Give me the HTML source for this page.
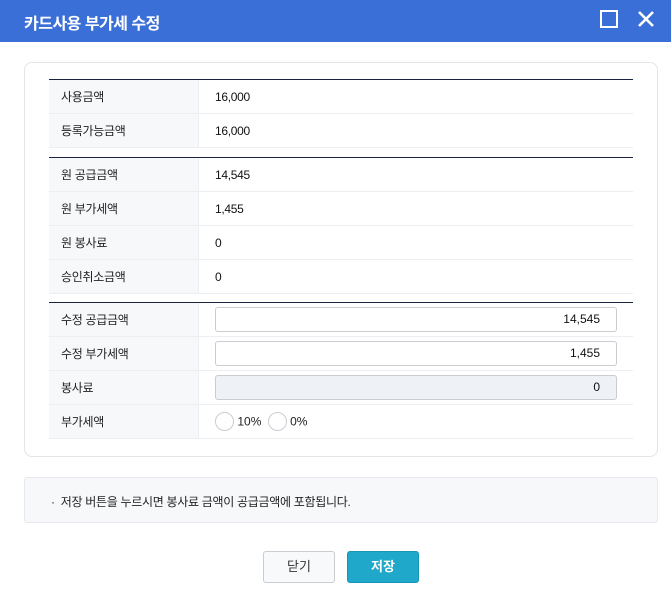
<!DOCTYPE html>
<html><head><meta charset="utf-8"><style>
*{box-sizing:border-box;margin:0;padding:0}
body{width:671px;height:608px;background:#fff;font-family:"Liberation Sans","Noto Sans CJK KR",sans-serif;font-size:12px;color:#222;position:relative;overflow:hidden}
.hd{position:absolute;left:0;top:0;width:671px;height:42px;background:#3b6fd8;color:#fff}
.hd .t{position:absolute;left:24px;top:10px;font-size:16px;font-weight:bold;letter-spacing:-0.5px}
.card{position:absolute;left:24px;top:62px;width:634px;height:395px;border:1px solid #e3e5e8;border-radius:8px}
.grp{position:absolute;left:49px;width:584px;border-top:1px solid #1a2340}
.row{height:34px;border-bottom:1px solid #eceef1;display:flex;align-items:center}
.lb{width:150px;height:100%;background:#f7f8fa;border-right:1px solid #eceef1;padding-left:12px;display:flex;align-items:center;letter-spacing:-0.3px}
.v{padding-left:16px;letter-spacing:-0.3px;color:#111}
.inp{margin-left:16px;width:402px;height:25px;border:1px solid #c9ccd1;border-radius:3px;text-align:right;padding-right:16px;line-height:23px;color:#111}
.inp.d{background:#eef1f6}
.rd{width:19px;height:19px;border:1px solid #c9ccd1;border-radius:50%;display:inline-block;vertical-align:middle}
.note{position:absolute;left:24px;top:477px;width:634px;height:46px;background:#f7f8fa;border:1px solid #e6e8eb;border-radius:3px;padding:15px 0 0 26px;letter-spacing:-0.3px}
.btn{position:absolute;top:551px;width:72px;height:32px;border-radius:3px;text-align:center;line-height:30px;font-size:13px}
</style></head><body>
<div class="hd"><div class="t">카드사용 부가세 수정</div>
<div style="position:absolute;left:600px;top:10px;width:18px;height:18px;border:2px solid #fff"></div>
<svg style="position:absolute;left:637px;top:10px" width="18" height="18"><path d="M2 2L16 16M16 2L2 16" stroke="#fff" stroke-width="2.6"/></svg>
</div>
<div class="card"></div>
<div class="grp" style="top:79px">
<div class="row"><div class="lb">사용금액</div><div class="v">16,000</div></div>
<div class="row"><div class="lb">등록가능금액</div><div class="v">16,000</div></div>
</div>
<div class="grp" style="top:157px">
<div class="row"><div class="lb">원 공급금액</div><div class="v">14,545</div></div>
<div class="row"><div class="lb">원 부가세액</div><div class="v">1,455</div></div>
<div class="row"><div class="lb">원 봉사료</div><div class="v">0</div></div>
<div class="row"><div class="lb">승인취소금액</div><div class="v">0</div></div>
</div>
<div class="grp" style="top:302px">
<div class="row"><div class="lb">수정 공급금액</div><div class="inp">14,545</div></div>
<div class="row"><div class="lb">수정 부가세액</div><div class="inp">1,455</div></div>
<div class="row"><div class="lb">봉사료</div><div class="inp d">0</div></div>
<div class="row"><div class="lb">부가세액</div><div style="padding-left:16px"><span class="rd"></span> <span style="vertical-align:middle">10%</span> <span class="rd" style="margin-left:3px"></span> <span style="vertical-align:middle">0%</span></div></div>
</div>
<div class="note">·&nbsp; 저장 버튼을 누르시면 봉사료 금액이 공급금액에 포함됩니다.</div>
<div class="btn" style="left:263px;border:1px solid #c9ccd1;background:#f8f9fa;color:#333">닫기</div>
<div class="btn" style="left:347px;background:#1fa8c9;border:1px solid #1795b4;color:#fff;font-weight:bold">저장</div>
</body></html>
